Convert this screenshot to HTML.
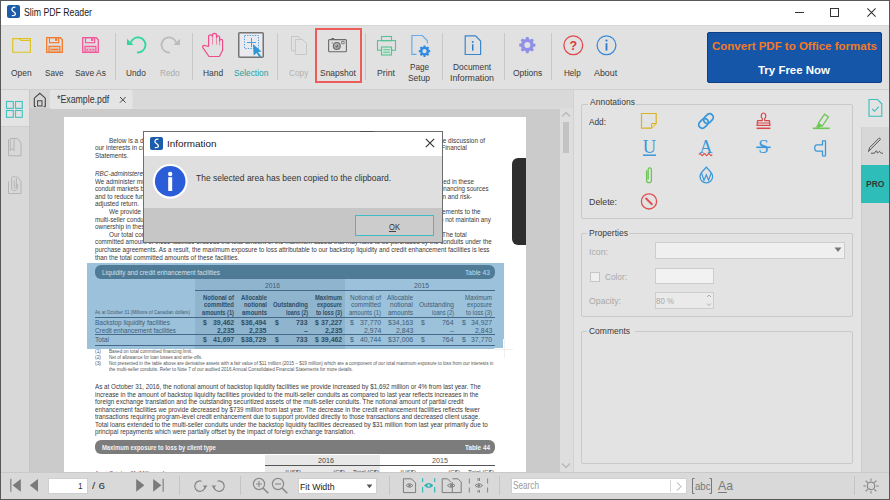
<!DOCTYPE html>
<html><head><meta charset="utf-8"><style>
html,body{margin:0;padding:0;}
body{width:890px;height:500px;overflow:hidden;position:relative;font-family:"Liberation Sans",sans-serif;}
.r{position:absolute;}
.t{position:absolute;white-space:nowrap;transform-origin:0 0;}
</style></head><body>
<div class="r" style="left:0px;top:0px;width:890px;height:500px;background:#585858;"></div>
<div class="r" style="left:1px;top:1px;width:888px;height:24px;background:#ffffff;"></div>
<div class="r" style="left:1px;top:25px;width:888px;height:1px;background:#d6d6d6;"></div>
<div class="r" style="left:1px;top:26px;width:888px;height:63px;background:#e1e1e1;"></div>
<div class="r" style="left:1px;top:89px;width:888px;height:1px;background:#cfcfcf;"></div>
<div class="r" style="left:7px;top:5px;width:13px;height:13px;background:#1b5cab;border-radius:2px;"></div>
<svg class="r" style="left:7px;top:5px;" width="13" height="13" viewBox="0 0 13 13"><path d="M7.9 2.1C6.1 1.9 4.5 3.3 5 5C5.5 6.6 8.4 7.3 8.4 8.9C8.4 10.2 7 10.8 5.3 10.6" fill="none" stroke="#fff" stroke-width="1.25" stroke-linecap="round"/></svg>
<div class="t" style="left:24.00px;top:7.23px;font-size:10.6px;line-height:10.6px;color:#1a1a1a;font-weight:400;transform:scaleX(0.8246);">Slim PDF Reader</div>
<div class="r" style="left:795px;top:12px;width:9px;height:1px;background:#333;"></div>
<div class="r" style="left:830px;top:8px;width:9px;height:9px;border:1px solid #333;box-sizing:border-box;"></div>
<svg class="r" style="left:866px;top:7px;" width="11" height="11" viewBox="0 0 11 11"><path d="M1.4 1.4L9.6 9.6M9.6 1.4L1.4 9.6" stroke="#333" stroke-width="1.05"/></svg>
<div class="r" style="left:1px;top:90px;width:28px;height:382px;background:#d8d8d8;"></div>
<div class="r" style="left:1px;top:90px;width:28px;height:36px;background:#e3e3e3;"></div>
<div class="r" style="left:1px;top:126px;width:28px;height:1px;background:#d0d0d0;"></div>
<div class="r" style="left:29px;top:90px;width:1px;height:382px;background:#c6c6c6;"></div>
<div class="r" style="left:30px;top:90px;width:543px;height:18px;background:#d9d9d9;"></div>
<div class="r" style="left:30px;top:90px;width:19px;height:18px;background:#d6d6d6;"></div>
<div class="r" style="left:30px;top:108px;width:530px;height:364px;background:#cbcbcb;"></div>
<div class="r" style="left:132px;top:108px;width:428px;height:1px;background:#dcdcdc;"></div>
<div class="r" style="left:132px;top:90px;width:1px;height:18px;background:#dedede;"></div>
<div class="r" style="left:50px;top:90px;width:82px;height:19px;background:#e4e4e4;"></div>
<div class="r" style="left:560px;top:108px;width:13px;height:364px;background:#dedede;"></div>
<div class="r" style="left:563px;top:122px;width:6px;height:31px;background:#c3c3c3;"></div>
<div class="r" style="left:573px;top:90px;width:1px;height:382px;background:#d2d2d2;"></div>
<div class="r" style="left:574px;top:90px;width:287px;height:382px;background:#e3e3e3;"></div>
<div class="r" style="left:861px;top:90px;width:28px;height:382px;background:#d7d7d7;"></div>
<div class="r" style="left:861px;top:90px;width:28px;height:37px;background:#e3e3e3;"></div>
<div class="r" style="left:861px;top:165px;width:28px;height:38px;background:#2ebdb8;"></div>
<div class="r" style="left:861px;top:203px;width:1px;height:269px;background:#cdcdcd;"></div>
<div class="r" style="left:861px;top:127px;width:1px;height:38px;background:#cdcdcd;"></div>
<div class="r" style="left:1px;top:472px;width:888px;height:1px;background:#c9c9c9;"></div>
<div class="r" style="left:1px;top:473px;width:888px;height:26px;background:#d9d9d9;"></div>
<div class="r" style="left:115px;top:33px;width:1px;height:47px;background:#c8c8c8;"></div>
<div class="r" style="left:192px;top:33px;width:1px;height:47px;background:#c8c8c8;"></div>
<div class="r" style="left:277px;top:33px;width:1px;height:47px;background:#c8c8c8;"></div>
<div class="r" style="left:365px;top:33px;width:1px;height:47px;background:#c8c8c8;"></div>
<div class="r" style="left:442px;top:33px;width:1px;height:47px;background:#c8c8c8;"></div>
<div class="r" style="left:504px;top:33px;width:1px;height:47px;background:#c8c8c8;"></div>
<div class="r" style="left:551px;top:33px;width:1px;height:47px;background:#c8c8c8;"></div>
<svg class="r" style="left:11px;top:37px;" width="22" height="17" viewBox="0 0 22 17"><path d="M1.7 1.6H8.6L10 3.5H19.4V15.2H1.7Z M8.9 1.6H19.4V3.5" fill="none" stroke="#dcc21e" stroke-width="1.1"/></svg>
<svg class="r" style="left:46px;top:37px;" width="17" height="16" viewBox="0 0 17 16"><path d="M0.7 0.7H14.3L16.3 2.7V15.3H0.7Z" fill="none" stroke="#f47a2e" stroke-width="1.3"/><rect x="3.5" y="0.7" width="9.2" height="5" fill="none" stroke="#f47a2e" stroke-width="1.2"/><rect x="9" y="1.3" width="2.2" height="2.6" fill="#f47a2e"/><rect x="3" y="9.3" width="10.9" height="6" fill="#f47a2e" fill-opacity="0.25" stroke="#f47a2e" stroke-width="1.2"/><rect x="4.5" y="11.8" width="8" height="1.4" fill="#f47a2e"/></svg>
<svg class="r" style="left:82px;top:37px;" width="17" height="16" viewBox="0 0 17 16"><path d="M0.7 0.7H14.3L16.3 2.7V15.3H0.7Z" fill="none" stroke="#f4559a" stroke-width="1.3"/><rect x="3.5" y="0.7" width="9.2" height="5" fill="none" stroke="#f4559a" stroke-width="1.2"/><rect x="9" y="1.3" width="2.2" height="2.6" fill="#f4559a"/><rect x="3" y="9.3" width="10.9" height="6" fill="#f4559a" fill-opacity="0.25" stroke="#f4559a" stroke-width="1.2"/><rect x="4.6" y="11.9" width="1.6" height="1.6" fill="#f4559a"/><rect x="7.6" y="11.9" width="1.6" height="1.6" fill="#f4559a"/><rect x="10.6" y="11.9" width="1.6" height="1.6" fill="#f4559a"/></svg>
<svg class="r" style="left:125px;top:36px;" width="22" height="19" viewBox="0 0 22 19"><path d="M12.1 16.4A7.5 7.5 0 1 0 5.9 6.4" fill="none" stroke="#2fd6a0" stroke-width="1.85"/><path d="M2 2.8V9H8.5Z" fill="#2fd6a0"/></svg>
<svg class="r" style="left:160px;top:36px;" width="22" height="19" viewBox="0 0 22 19"><g transform="translate(22,0) scale(-1,1)"><path d="M12.1 16.4A7.5 7.5 0 1 0 5.9 6.4" fill="none" stroke="#bcbcbc" stroke-width="1.85"/><path d="M2 2.8V9H8.5Z" fill="#bcbcbc"/></g></svg>
<svg class="r" style="left:201px;top:32px;" width="23" height="26" viewBox="0 0 23 26"><path d="M8 24.5L1.8 15.6C1.1 14.4 2.2 13.2 3.6 13.5L7.6 14.3V4.4C7.6 2.3 11.5 2.3 11.5 4.4V3.1C11.5 0.7 15.5 0.7 15.5 3.1V5.5C15.5 3.4 18.6 3.4 18.6 5.5V8.8C18.6 6.8 21.6 6.8 21.6 8.8V18.2L18.4 24.5Z" fill="none" stroke="#f04b8b" stroke-width="1.2" stroke-linejoin="round"/><path d="M11.5 4V12.6M15.5 4.4V12.6M18.6 6V13.4" stroke="#f04b8b" stroke-opacity="0.6" stroke-width="1"/></svg>
<svg class="r" style="left:238px;top:32px;" width="26" height="26" viewBox="0 0 26 26"><rect x="0.75" y="0.75" width="24.5" height="24.5" rx="1" fill="#e9e9ee" stroke="#747474" stroke-width="1.5"/></svg>
<svg class="r" style="left:238px;top:32px;" width="26" height="26" viewBox="0 0 26 26"><rect x="6.5" y="3.5" width="14" height="13" fill="none" stroke="#4aa0dc" stroke-width="1" stroke-dasharray="1.3 1.3"/><path d="M9 10.5H18M13.5 6V15" stroke="#4aa0dc" stroke-width="1"/><path d="M15 12 L23.5 19.5 L20 20 L23.2 24.3 L21.6 25.5 L18.6 21 L15.7 23.6 Z" fill="#2f96d6"/></svg>
<svg class="r" style="left:290px;top:35px;" width="18" height="21" viewBox="0 0 18 21"><path d="M1.5 1.5H8.3L10.5 3.8V15.7H1.5Z" fill="#e1e1e1" stroke="#c6c6c6" stroke-width="1"/><path d="M5.3 4.5H12.6L16.5 8.5V19.5H5.3Z" fill="#e1e1e1" stroke="#c6c6c6" stroke-width="1"/></svg>
<div class="r" style="left:315px;top:28px;width:47px;height:55px;border:2px solid #ec5d5a;box-sizing:border-box;"></div>
<svg class="r" style="left:327px;top:37px;" width="21" height="16" viewBox="0 0 21 16"><rect x="1.6" y="2.6" width="17.8" height="12.1" rx="1" fill="none" stroke="#6a6a6a" stroke-width="1.1"/><rect x="4.4" y="1" width="2.8" height="1.4" fill="#6a6a6a"/><circle cx="9.8" cy="8.9" r="3.4" fill="#b0b0b0" stroke="#6a6a6a" stroke-width="1.2"/><circle cx="9.8" cy="8.9" r="1.5" fill="#6a6a6a"/><circle cx="9.2" cy="8.2" r="0.6" fill="#ddd"/><rect x="14.6" y="4.4" width="2.6" height="2.4" rx="0.5" fill="none" stroke="#6a6a6a" stroke-width="0.9"/><circle cx="5.2" cy="5.8" r="0.65" fill="#6a6a6a"/></svg>
<svg class="r" style="left:376px;top:35px;" width="21" height="21" viewBox="0 0 21 21"><rect x="5.5" y="1.5" width="10" height="4.2" fill="none" stroke="#58c194" stroke-width="1.1"/><rect x="1.5" y="5.6" width="18" height="9.6" fill="none" stroke="#58c194" stroke-width="1.1"/><rect x="5.5" y="12" width="10" height="8" fill="#cfe8da" stroke="#58c194" stroke-width="1.1"/><path d="M7.3 14.7H13.8M7.3 17.2H13.8" stroke="#58c194" stroke-width="1.1"/></svg>
<svg class="r" style="left:410px;top:34px;" width="22" height="24" viewBox="0 0 22 24"><path d="M6.6 20.3H1.9V1.5H12.3L17.4 6.8V9.6" fill="none" stroke="#66aae8" stroke-width="1.15"/></svg>
<svg class="r" style="left:410px;top:34px;" width="22" height="24" viewBox="0 0 22 24"><path d="M18.87,16.11 L20.22,16.24 L20.22,18.16 L18.87,18.29 L18.36,19.52 L19.22,20.57 L17.87,21.92 L16.82,21.06 L15.59,21.57 L15.46,22.92 L13.54,22.92 L13.41,21.57 L12.18,21.06 L11.13,21.92 L9.78,20.57 L10.64,19.52 L10.13,18.29 L8.78,18.16 L8.78,16.24 L10.13,16.11 L10.64,14.88 L9.78,13.83 L11.13,12.48 L12.18,13.34 L13.41,12.83 L13.54,11.48 L15.46,11.48 L15.59,12.83 L16.82,13.34 L17.87,12.48 L19.22,13.83 L18.36,14.88Z M16.6,17.2 A2.1 2.1 0 1 0 12.4,17.2 A2.1 2.1 0 1 0 16.6,17.2Z" fill="#2f8ae6" fill-rule="evenodd"/></svg>
<svg class="r" style="left:463px;top:34px;" width="20" height="22" viewBox="0 0 20 22"><path d="M2.2 1.9H12.6L17.6 7V20.5H2.2Z" fill="none" stroke="#3a86cf" stroke-width="1.2"/><circle cx="9.7" cy="8" r="0.95" fill="#2f7acc"/><rect x="9" y="10.3" width="1.45" height="6.3" fill="#2f7acc"/></svg>
<svg class="r" style="left:517px;top:35px;" width="21" height="21" viewBox="0 0 21 21"><path d="M16.51,8.55 L18.39,8.75 L18.39,11.45 L16.51,11.65 L15.79,13.40 L16.98,14.86 L15.06,16.78 L13.60,15.59 L11.85,16.31 L11.65,18.19 L8.95,18.19 L8.75,16.31 L7.00,15.59 L5.54,16.78 L3.62,14.86 L4.81,13.40 L4.09,11.65 L2.21,11.45 L2.21,8.75 L4.09,8.55 L4.81,6.80 L3.62,5.34 L5.54,3.42 L7.00,4.61 L8.75,3.89 L8.95,2.01 L11.65,2.01 L11.85,3.89 L13.60,4.61 L15.06,3.42 L16.98,5.34 L15.79,6.80Z M13.3,10.1 A3.0 3.0 0 1 0 7.300000000000001,10.1 A3.0 3.0 0 1 0 13.3,10.1Z" fill="#9190e8" fill-rule="evenodd"/></svg>
<svg class="r" style="left:562px;top:34px;" width="23" height="23" viewBox="0 0 23 23"><circle cx="11.3" cy="11.3" r="9.4" fill="none" stroke="#e0484c" stroke-width="1.3"/><text x="11.3" y="15.6" text-anchor="middle" font-family="Liberation Sans" font-weight="700" font-size="12.5" fill="#dd3a3e">?</text></svg>
<svg class="r" style="left:595px;top:34px;" width="23" height="23" viewBox="0 0 23 23"><circle cx="11.5" cy="11.3" r="9.4" fill="none" stroke="#3b8ad8" stroke-width="1.3"/><circle cx="11.5" cy="6.6" r="1.1" fill="#2f7acc"/><rect x="10.6" y="9.2" width="1.8" height="7.4" fill="#2f7acc"/></svg>
<div class="t" style="left:10.70px;top:67.87px;font-size:9.6px;line-height:9.6px;color:#3a3a3a;font-weight:400;transform:scaleX(0.8772);">Open</div>
<div class="t" style="left:45.00px;top:67.87px;font-size:9.6px;line-height:9.6px;color:#3a3a3a;font-weight:400;transform:scaleX(0.8454);">Save</div>
<div class="t" style="left:74.80px;top:67.87px;font-size:9.6px;line-height:9.6px;color:#3a3a3a;font-weight:400;transform:scaleX(0.8773);">Save As</div>
<div class="t" style="left:126.00px;top:67.87px;font-size:9.6px;line-height:9.6px;color:#3a3a3a;font-weight:400;transform:scaleX(0.8627);">Undo</div>
<div class="t" style="left:159.60px;top:67.87px;font-size:9.6px;line-height:9.6px;color:#ababab;font-weight:400;transform:scaleX(0.8540);">Redo</div>
<div class="t" style="left:202.70px;top:67.87px;font-size:9.6px;line-height:9.6px;color:#3a3a3a;font-weight:400;transform:scaleX(0.8758);">Hand</div>
<div class="t" style="left:233.90px;top:67.87px;font-size:9.6px;line-height:9.6px;color:#1aa4a4;font-weight:400;transform:scaleX(0.8685);">Selection</div>
<div class="t" style="left:288.90px;top:67.87px;font-size:9.6px;line-height:9.6px;color:#b2b2b2;font-weight:400;transform:scaleX(0.8612);">Copy</div>
<div class="t" style="left:319.80px;top:67.87px;font-size:9.6px;line-height:9.6px;color:#3a3a3a;font-weight:400;transform:scaleX(0.8825);">Snapshot</div>
<div class="t" style="left:377.10px;top:67.87px;font-size:9.6px;line-height:9.6px;color:#3a3a3a;font-weight:400;transform:scaleX(0.9068);">Print</div>
<div class="t" style="left:512.70px;top:67.87px;font-size:9.6px;line-height:9.6px;color:#3a3a3a;font-weight:400;transform:scaleX(0.8856);">Options</div>
<div class="t" style="left:564.10px;top:67.87px;font-size:9.6px;line-height:9.6px;color:#3a3a3a;font-weight:400;transform:scaleX(0.8458);">Help</div>
<div class="t" style="left:594.40px;top:67.87px;font-size:9.6px;line-height:9.6px;color:#3a3a3a;font-weight:400;transform:scaleX(0.9247);">About</div>
<div class="t" style="left:409.60px;top:62.07px;font-size:9.6px;line-height:9.6px;color:#3a3a3a;font-weight:400;transform:scaleX(0.8519);">Page</div>
<div class="t" style="left:408.00px;top:72.97px;font-size:9.6px;line-height:9.6px;color:#3a3a3a;font-weight:400;transform:scaleX(0.8769);">Setup</div>
<div class="t" style="left:452.80px;top:62.07px;font-size:9.6px;line-height:9.6px;color:#3a3a3a;font-weight:400;transform:scaleX(0.8731);">Document</div>
<div class="t" style="left:450.00px;top:72.97px;font-size:9.6px;line-height:9.6px;color:#3a3a3a;font-weight:400;transform:scaleX(0.9162);">Information</div>
<div class="r" style="left:707px;top:32px;width:175px;height:51px;background:#1656a9;border:1px solid #0e3f82;box-sizing:border-box;border-radius:2px;"></div>
<div class="t" style="left:712.00px;top:40.38px;font-size:11.6px;line-height:11.6px;color:#f47a24;font-weight:700;transform:scaleX(0.9922);">Convert PDF to Office formats</div>
<div class="t" style="left:758.00px;top:64.38px;font-size:11.6px;line-height:11.6px;color:#ffffff;font-weight:700;transform:scaleX(0.9884);">Try Free Now</div>
<svg class="r" style="left:5px;top:100px;" width="19" height="19" viewBox="0 0 19 19"><rect x="1.5" y="1.5" width="6.8" height="6.8" fill="none" stroke="#45c2c2" stroke-width="1.15"/><rect x="1.5" y="10.5" width="6.8" height="6.8" fill="none" stroke="#45c2c2" stroke-width="1.15"/><rect x="10.5" y="1.5" width="6.8" height="6.8" fill="none" stroke="#45c2c2" stroke-width="1.15"/><rect x="10.5" y="10.5" width="6.8" height="6.8" fill="none" stroke="#45c2c2" stroke-width="1.15"/></svg>
<svg class="r" style="left:7px;top:137px;" width="16" height="20" viewBox="0 0 16 20"><path d="M1.5 2.2V18.8H14V6L10.5 1.5H7" fill="none" stroke="#b4b4b4" stroke-width="1"/><path d="M3.2 1.5H7V13.8L5.1 11.6L3.2 13.8Z" fill="none" stroke="#b4b4b4" stroke-width="1"/></svg>
<svg class="r" style="left:7px;top:175px;" width="16" height="20" viewBox="0 0 16 20"><path d="M1.5 6.5V18.5H14V6.2L10 1.5" fill="none" stroke="#b4b4b4" stroke-width="1"/><path d="M7.2 5.5V12.3C7.2 13.6 9.4 13.6 9.4 12.3V3.6C9.4 0.9 4.6 0.9 4.6 3.6V13.2C4.6 16.4 10.4 16.4 10.4 13.2V9" fill="none" stroke="#b4b4b4" stroke-width="1"/></svg>
<svg class="r" style="left:33px;top:92px;" width="14" height="16" viewBox="0 0 14 16"><path d="M1.3 14.5V6.2L6.8 1.3L12.3 6.2V14.5" fill="none" stroke="#444" stroke-width="1.1"/><rect x="4.6" y="8.8" width="4.4" height="5.2" fill="none" stroke="#444" stroke-width="1"/><path d="M1 14.6H3M10.6 14.6H12.6" stroke="#444" stroke-width="1"/></svg>
<div class="t" style="left:57.00px;top:95.13px;font-size:10px;line-height:10px;color:#333;font-weight:400;transform:scaleX(0.8776);">*Example.pdf</div>
<svg class="r" style="left:119px;top:96px;" width="8" height="8" viewBox="0 0 8 8"><path d="M1 1L6.6 6.6M6.6 1L1 6.6" stroke="#444" stroke-width="1"/></svg>
<svg class="r" style="left:561px;top:111px;" width="10" height="7" viewBox="0 0 10 7"><path d="M1 5.5L5 1.5L9 5.5" fill="none" stroke="#b9b9b9" stroke-width="1.4"/></svg>
<svg class="r" style="left:561px;top:462px;" width="10" height="7" viewBox="0 0 10 7"><path d="M1 1.5L5 5.5L9 1.5" fill="none" stroke="#b9b9b9" stroke-width="1.4"/></svg>
<svg class="r" style="left:867px;top:98px;" width="17" height="20" viewBox="0 0 17 20"><path d="M2 1.5H10.5L14.8 5.8V18.3H2Z" fill="none" stroke="#3cbcbc" stroke-width="1.1"/><path d="M5.3 11L7.6 13.3L11.8 8.6" fill="none" stroke="#3cbcbc" stroke-width="1.1"/></svg>
<svg class="r" style="left:866px;top:136px;" width="20" height="20" viewBox="0 0 20 20"><path d="M2.5 15.5L3.6 11.6L12.8 2.4C13.6 1.6 15 2.9 14.2 3.7L5 12.9Z" fill="none" stroke="#555" stroke-width="1"/><path d="M5 17.2H8.2C9.2 17.2 9.6 14.6 10.4 14.8C11.2 15 10.8 17.2 11.8 17C12.6 16.8 12.8 15.2 13.6 15.4C14.4 15.6 14.2 17.2 15.4 17.2H17" fill="none" stroke="#555" stroke-width="1"/></svg>
<div class="t" style="left:865.75px;top:179.47px;font-size:9.6px;line-height:9.6px;color:#2f3b3b;font-weight:700;transform:scaleX(0.8893);">PRO</div>
<div class="r" style="left:581px;top:104px;width:272px;height:115px;border:1px solid #c9c9c9;box-sizing:border-box;border-radius:2px;"></div>
<div class="r" style="left:588px;top:101px;width:48px;height:6px;background:#e3e3e3;"></div>
<div class="t" style="left:590.00px;top:98.18px;font-size:9px;line-height:9px;color:#3a3a3a;font-weight:400;transform:scaleX(0.9466);">Annotations</div>
<div class="t" style="left:589.00px;top:117.53px;font-size:9.3px;line-height:9.3px;color:#3a3a3a;font-weight:400;transform:scaleX(0.8886);">Add:</div>
<div class="t" style="left:589.00px;top:198.03px;font-size:9.3px;line-height:9.3px;color:#3a3a3a;font-weight:400;transform:scaleX(0.9502);">Delete:</div>
<div class="r" style="left:581px;top:233px;width:272px;height:84px;border:1px solid #c9c9c9;box-sizing:border-box;border-radius:2px;"></div>
<div class="r" style="left:587px;top:230px;width:42px;height:6px;background:#e3e3e3;"></div>
<div class="t" style="left:589.00px;top:228.53px;font-size:9.3px;line-height:9.3px;color:#3a3a3a;font-weight:400;transform:scaleX(0.9201);">Properties</div>
<div class="t" style="left:589.00px;top:247.53px;font-size:9.3px;line-height:9.3px;color:#a9a9a9;font-weight:400;transform:scaleX(0.9424);">Icon:</div>
<div class="r" style="left:655px;top:242px;width:190px;height:17px;background:#efefef;border:1px solid #cdcdcd;box-sizing:border-box;"></div>
<svg class="r" style="left:834px;top:247px;" width="8" height="6" viewBox="0 0 8 6"><path d="M0.5 0.5H7.5L4 5Z" fill="#777"/></svg>
<div class="r" style="left:590px;top:272px;width:10px;height:10px;background:#efefef;border:1px solid #c6c6c6;box-sizing:border-box;"></div>
<div class="t" style="left:605.00px;top:273.13px;font-size:9.3px;line-height:9.3px;color:#a9a9a9;font-weight:400;transform:scaleX(0.8868);">Color:</div>
<div class="r" style="left:655px;top:268px;width:59px;height:16px;background:#f2f2f2;border:1px solid #cdcdcd;box-sizing:border-box;"></div>
<div class="t" style="left:589.00px;top:297.13px;font-size:9.3px;line-height:9.3px;color:#a9a9a9;font-weight:400;transform:scaleX(0.9381);">Opacity:</div>
<div class="r" style="left:655px;top:292px;width:59px;height:17px;background:#eaeaea;border:1px solid #cdcdcd;box-sizing:border-box;"></div>
<div class="t" style="left:656.00px;top:296.73px;font-size:9.3px;line-height:9.3px;color:#a9a9a9;font-weight:400;transform:scaleX(0.8492);">80 %</div>
<svg class="r" style="left:706px;top:293px;" width="6" height="15" viewBox="0 0 6 15"><path d="M1 4L3 2L5 4M1 10.5L3 12.5L5 10.5" fill="none" stroke="#999" stroke-width="0.8"/></svg>
<div class="r" style="left:581px;top:331px;width:272px;height:133px;border:1px solid #c9c9c9;box-sizing:border-box;border-radius:2px;"></div>
<div class="r" style="left:587px;top:328px;width:48px;height:6px;background:#e3e3e3;"></div>
<div class="t" style="left:589.00px;top:326.53px;font-size:9.3px;line-height:9.3px;color:#3a3a3a;font-weight:400;transform:scaleX(0.9119);">Comments</div>
<svg class="r" style="left:640px;top:112px;" width="18" height="18" viewBox="0 0 18 18"><path d="M1.5 1.5H16.2V11.5L11.5 16.2H1.5Z" fill="none" stroke="#d9b423" stroke-width="1.2"/><path d="M16.2 11.5H11.5V16.2" fill="#eedd99" stroke="#d9b423" stroke-width="1"/></svg>
<svg class="r" style="left:696px;top:111px;" width="20" height="20" viewBox="0 0 20 20"><g transform="rotate(-45 10 10)" fill="none" stroke="#3a98da" stroke-width="1.8"><rect x="1.2" y="6.4" width="10.6" height="7.2" rx="3.6"/><rect x="8.2" y="6.4" width="10.6" height="7.2" rx="3.6"/></g></svg>
<svg class="r" style="left:754px;top:111px;" width="19" height="20" viewBox="0 0 19 20"><path d="M8.3 9.6V7.4C6.6 6.3 6.9 2 9.5 2C12.1 2 12.4 6.3 10.7 7.4V9.6H15.4L16 14.4H3L3.6 9.6Z" fill="none" stroke="#d9474a" stroke-width="1.2" stroke-linejoin="round"/><path d="M3.4 12H15.6" stroke="#d9474a" stroke-width="1"/><path d="M2.6 17.3H16.4" stroke="#d9474a" stroke-width="1.5"/></svg>
<svg class="r" style="left:811px;top:111px;" width="20" height="20" viewBox="0 0 20 20"><path d="M7.4 12.2L13.6 3.2L17.4 6L11.2 15Z" fill="none" stroke="#6cc654" stroke-width="1.3"/><path d="M7.4 12.2L5 15.8L7.2 17.2L11.2 15Z" fill="#6cc654"/><path d="M1.8 17.3H18.6" stroke="#6cc654" stroke-width="1.6"/></svg>
<svg class="r" style="left:640px;top:138px;" width="18" height="20" viewBox="0 0 18 20"><text x="9.5" y="15.2" text-anchor="middle" font-family="Liberation Serif" font-size="18.5" fill="#3a98da">U</text><path d="M3 17.2H16" stroke="#3a98da" stroke-width="1.5"/></svg>
<svg class="r" style="left:697px;top:138px;" width="18" height="20" viewBox="0 0 18 20"><text x="9" y="14.6" text-anchor="middle" font-family="Liberation Serif" font-size="18" fill="#3a98da">A</text><path d="M2 16.6Q3.1 14.6 4.2 16.6T6.4 16.6T8.6 16.6T10.8 16.6T13 16.6T15.2 16.6" fill="none" stroke="#e04848" stroke-width="1.1"/></svg>
<svg class="r" style="left:754px;top:138px;" width="19" height="20" viewBox="0 0 19 20"><text x="9.5" y="15.4" text-anchor="middle" font-family="Liberation Serif" font-size="19" fill="#3a98da">S</text><path d="M2.3 9.3H16.7" stroke="#3a98da" stroke-width="1.6"/></svg>
<svg class="r" style="left:811px;top:139px;" width="18" height="19" viewBox="0 0 18 19"><path d="M14.5 1.8V16.5C14.5 17.2 11.5 17.2 11.5 16.5V12.2H5.8C3 12.2 3 5.8 5.8 5.8H11.5V2.2C11.5 1.5 14.5 1.5 14.5 2.2" fill="none" stroke="#3a98da" stroke-width="1.3"/></svg>
<svg class="r" style="left:641px;top:166px;" width="16" height="20" viewBox="0 0 16 20"><path d="M5.6 4.5V14.5C5.6 17.4 10.4 17.4 10.4 14.5V3.6C10.4 1.4 7.2 1.4 7.2 3.6V13.4" fill="none" stroke="#6cc654" stroke-width="1.3"/></svg>
<svg class="r" style="left:697px;top:165px;" width="19" height="20" viewBox="0 0 19 20"><path d="M9.3 2.2C10.6 4.2 15.6 7 15.6 11.6C15.6 15.2 12.8 17.8 9.3 17.8C5.8 17.8 3 15.2 3 11.6C3 7 8 4.2 9.3 2.2Z" fill="none" stroke="#3a98da" stroke-width="1.25"/><path d="M4.6 8.2L7 15.4L9.3 9.8L11.6 15.4L14 8.2" fill="none" stroke="#3a98da" stroke-width="1.2"/></svg>
<svg class="r" style="left:640px;top:192px;" width="18" height="19" viewBox="0 0 18 19"><circle cx="9" cy="9.4" r="7.6" fill="none" stroke="#e05050" stroke-width="1.3"/><path d="M5.6 6L12.4 12.8" stroke="#e05050" stroke-width="2"/></svg>
<svg class="r" style="left:9px;top:478px;" width="14" height="15" viewBox="0 0 14 15"><rect x="1.3" y="0.8" width="1.1" height="13" fill="#7a7a7a"/><path d="M3.6 7.3L11.8 0.9V13.7Z" fill="#7a7a7a"/></svg>
<svg class="r" style="left:29px;top:478px;" width="11" height="15" viewBox="0 0 11 15"><path d="M0.8 7.3L9 0.9V13.7Z" fill="#7a7a7a"/></svg>
<div class="r" style="left:48px;top:478px;width:40px;height:16px;background:#ffffff;border:1px solid #cfcfcf;box-sizing:border-box;"></div>
<div class="t" style="left:78.40px;top:482.21px;font-size:9.2px;line-height:9.2px;color:#333;font-weight:400;transform:scaleX(0.8990);">1</div>
<div class="t" style="left:92.00px;top:482.21px;font-size:9.2px;line-height:9.2px;color:#333;font-weight:400;transform:scaleX(1.2710);">/ 6</div>
<svg class="r" style="left:135px;top:478px;" width="11" height="15" viewBox="0 0 11 15"><path d="M1.2 0.9L9.4 7.3L1.2 13.7Z" fill="#7a7a7a"/></svg>
<svg class="r" style="left:152px;top:478px;" width="14" height="15" viewBox="0 0 14 15"><path d="M1.2 0.9L9.4 7.3L1.2 13.7Z" fill="#7a7a7a"/><rect x="10.6" y="0.8" width="1.1" height="13" fill="#7a7a7a"/></svg>
<div class="r" style="left:179px;top:476px;width:1px;height:19px;background:#c4c4c4;"></div>
<div class="r" style="left:240px;top:476px;width:1px;height:19px;background:#c4c4c4;"></div>
<div class="r" style="left:389px;top:476px;width:1px;height:19px;background:#c4c4c4;"></div>
<div class="r" style="left:499px;top:476px;width:1px;height:19px;background:#c4c4c4;"></div>
<div class="r" style="left:854px;top:476px;width:1px;height:19px;background:#c4c4c4;"></div>
<svg class="r" style="left:193px;top:478px;" width="16" height="16" viewBox="0 0 16 16"><path d="M8.6 3.2A5.2 5.2 0 1 0 12.2 8.4" fill="none" stroke="#858585" stroke-width="1.2"/><path d="M9.9 7.6H14.5L12.2 10.6Z" fill="#858585"/></svg>
<svg class="r" style="left:210px;top:478px;" width="16" height="16" viewBox="0 0 16 16"><g transform="translate(16,0) scale(-1,1)"><path d="M8.6 3.2A5.2 5.2 0 1 0 12.2 8.4" fill="none" stroke="#858585" stroke-width="1.2"/><path d="M9.9 7.6H14.5L12.2 10.6Z" fill="#858585"/></g></svg>
<svg class="r" style="left:252px;top:477px;" width="18" height="18" viewBox="0 0 18 18"><circle cx="7" cy="7" r="5.6" fill="none" stroke="#8a8a8a" stroke-width="1.2"/><path d="M11 11L16.3 16.3" stroke="#8a8a8a" stroke-width="1.6"/><path d="M4 7H10M7 4V10" stroke="#8a8a8a" stroke-width="1.1"/></svg>
<svg class="r" style="left:271px;top:477px;" width="18" height="18" viewBox="0 0 18 18"><circle cx="7" cy="7" r="5.6" fill="none" stroke="#8a8a8a" stroke-width="1.2"/><path d="M11 11L16.3 16.3" stroke="#8a8a8a" stroke-width="1.6"/><path d="M4 7H10" stroke="#8a8a8a" stroke-width="1.1"/></svg>
<div class="r" style="left:298px;top:478px;width:79px;height:16px;background:#ffffff;border:1px solid #cfcfcf;box-sizing:border-box;"></div>
<div class="t" style="left:299.80px;top:481.76px;font-size:9.5px;line-height:9.5px;color:#222;font-weight:400;transform:scaleX(0.9206);">Fit Width</div>
<svg class="r" style="left:366px;top:484px;" width="7" height="5" viewBox="0 0 7 5"><path d="M0.6 0.4H6.4L3.5 4.2Z" fill="#555"/></svg>
<svg class="r" style="left:398px;top:474px;" width="96" height="24" viewBox="0 0 96 24"><path d="M5.4 4.8H13.4L17.6 9V18.6H5.4Z" fill="none" stroke="#7c7c7c" stroke-width="1"/><path d="M8.10 11.5Q11.5 7.98 14.90 11.5Q11.5 15.02 8.10 11.5Z" fill="none" stroke="#7c7c7c" stroke-width="1"/><circle cx="11.5" cy="11.5" r="1.2" fill="#7c7c7c"/><path d="M24.6 4.3V8M24.6 13V18.6M36.7 4.3V8M36.7 13V18.6" stroke="#2ab4b4" stroke-width="1.1"/><path d="M26.50 11.5Q30.7 7.66 34.90 11.5Q30.7 15.34 26.50 11.5Z" fill="#2ab4b4" stroke="#2ab4b4" stroke-width="1"/><circle cx="30.7" cy="11.5" r="1.2" fill="#d9d9d9"/><path d="M44.2 18.6V4.8H49.5L53 8.3M54.3 18.6H44.2M54.3 18.6V8.3M54.5 4.8H60L63.2 8V18.6H54.3" fill="none" stroke="#7c7c7c" stroke-width="1"/><path d="M49.40 11.5Q53.2 7.98 57.00 11.5Q53.2 15.02 49.40 11.5Z" fill="none" stroke="#7c7c7c" stroke-width="1"/><circle cx="53.2" cy="11.5" r="1.2" fill="#7c7c7c"/><path d="M71.3 4.5V9.5M71.3 13.5V18.6M89.6 4.5V9.5M89.6 13.5V18.6M80 4V7M81.5 4V7M80 16V18.6M81.5 16V18.6" stroke="#7c7c7c" stroke-width="0.9"/><path d="M77.00 11.5Q80.8 7.98 84.60 11.5Q80.8 15.02 77.00 11.5Z" fill="none" stroke="#7c7c7c" stroke-width="1"/><circle cx="80.8" cy="11.5" r="1.2" fill="#7c7c7c"/></svg>
<div class="r" style="left:511px;top:478px;width:176px;height:16px;background:#ffffff;border:1px solid #d0d0d0;box-sizing:border-box;"></div>
<div class="t" style="left:512.60px;top:481.37px;font-size:10.2px;line-height:10.2px;color:#9a9a9a;font-weight:400;transform:scaleX(0.8045);">Search</div>
<div class="r" style="left:670px;top:480px;width:1px;height:12px;background:#d6d6d6;"></div>
<svg class="r" style="left:675px;top:481px;" width="8" height="11" viewBox="0 0 8 11"><path d="M2 1.5L6 5.5L2 9.5" fill="none" stroke="#a0a0a0" stroke-width="1"/></svg>
<svg class="r" style="left:691px;top:477px;" width="22" height="18" viewBox="0 0 22 18"><path d="M3.5 1.5H1.5V16.5H3.5M18.5 1.5H20.5V16.5H18.5" fill="none" stroke="#777" stroke-width="1"/></svg>
<div class="t" style="left:694.50px;top:480.61px;font-size:10.5px;line-height:10.5px;color:#777;font-weight:400;transform:scaleX(0.9156);">abc</div>
<div class="t" style="left:718.00px;top:479.07px;font-size:13.5px;line-height:13.5px;color:#7a7a7a;font-weight:400;transform:scaleX(0.9084);">Aa</div>
<div class="r" style="left:718px;top:492px;width:9px;height:1px;background:#7a7a7a;"></div>
<svg class="r" style="left:863px;top:478px;" width="16" height="16" viewBox="0 0 16 16"><circle cx="8" cy="7.9" r="3.7" fill="none" stroke="#8a8a8a" stroke-width="1.2"/><path d="M13.20 8.00L15.60 8.00" stroke="#8a8a8a" stroke-width="1.15"/><path d="M11.25 11.25L13.37 13.37" stroke="#8a8a8a" stroke-width="1.15"/><path d="M8.00 13.20L8.00 15.60" stroke="#8a8a8a" stroke-width="1.15"/><path d="M4.75 11.25L2.63 13.37" stroke="#8a8a8a" stroke-width="1.15"/><path d="M2.80 8.00L0.40 8.00" stroke="#8a8a8a" stroke-width="1.15"/><path d="M4.75 4.75L2.63 2.63" stroke="#8a8a8a" stroke-width="1.15"/><path d="M8.00 2.80L8.00 0.40" stroke="#8a8a8a" stroke-width="1.15"/><path d="M11.25 4.75L13.37 2.63" stroke="#8a8a8a" stroke-width="1.15"/></svg>
<div class="r" style="left:64px;top:117px;width:462px;height:355px;background:#ffffff;"></div>
<div class="r" style="left:0;top:0;width:890px;height:500px;clip-path:inset(108px 330px 28px 30px)">
<div class="t" style="left:108.90px;top:136.65px;font-size:7.5px;line-height:7.5px;color:#3a3a3a;font-weight:400;transform:scaleX(0.8535);">Below is a description of consolidated structured entities that we sponsor and those we have interests in the form of the discussion of</div>
<div class="t" style="left:95.10px;top:144.25px;font-size:7.5px;line-height:7.5px;color:#3a3a3a;font-weight:400;transform:scaleX(0.8536);">our interests in consolidated consolidated structured entities that we sponsor and Note 7 of our 2016 Annual Consolidated Financial</div>
<div class="t" style="left:95.10px;top:152.05px;font-size:7.5px;line-height:7.5px;color:#3a3a3a;font-weight:400;transform:scaleX(0.8346);">Statements.</div>
<div class="t" style="left:95.10px;top:170.05px;font-size:7.5px;line-height:7.5px;color:#3a3a3a;font-weight:400;font-style:italic;transform:scaleX(0.8401);">RBC-administered multi-seller conduits</div>
<div class="t" style="left:95.10px;top:177.95px;font-size:7.5px;line-height:7.5px;color:#3a3a3a;font-weight:400;transform:scaleX(0.8372);">We administer multi-seller consolidated structured entities that we sponsor and those we have interests in the assets securitized in these</div>
<div class="t" style="left:95.10px;top:185.45px;font-size:7.5px;line-height:7.5px;color:#3a3a3a;font-weight:400;transform:scaleX(0.8265);">conduit markets by consolidated structured entities that we sponsor and those we have interests in the form obtain alternative financing sources</div>
<div class="t" style="left:95.10px;top:192.85px;font-size:7.5px;line-height:7.5px;color:#3a3a3a;font-weight:400;transform:scaleX(0.8378);">and to reduce funding consolidated structured entities that we sponsor and those we have interests in the form of higher return and risk-</div>
<div class="t" style="left:95.10px;top:200.35px;font-size:7.5px;line-height:7.5px;color:#3a3a3a;font-weight:400;transform:scaleX(0.8423);">adjusted return.</div>
<div class="t" style="left:108.90px;top:207.95px;font-size:7.5px;line-height:7.5px;color:#3a3a3a;font-weight:400;transform:scaleX(0.8475);">We provide services consolidated structured entities that we sponsor and those we have interests partial credit enhancements to the</div>
<div class="t" style="left:95.10px;top:215.55px;font-size:7.5px;line-height:7.5px;color:#3a3a3a;font-weight:400;transform:scaleX(0.8308);">multi-seller conduits. consolidated structured entities that we sponsor and those we have interests in the form of liquidity we do not maintain any</div>
<div class="t" style="left:95.10px;top:223.15px;font-size:7.5px;line-height:7.5px;color:#3a3a3a;font-weight:400;transform:scaleX(0.8504);">ownership in these consolidated structured entities that we sponsor and those we have interests in conduits.</div>
<div class="t" style="left:108.90px;top:230.75px;font-size:7.5px;line-height:7.5px;color:#3a3a3a;font-weight:400;transform:scaleX(0.8423);">Our total commitments consolidated structured entities that we sponsor and those we have interests in the table below. The total</div>
<div class="t" style="left:95.10px;top:238.35px;font-size:7.5px;line-height:7.5px;color:#3a3a3a;font-weight:400;transform:scaleX(0.8338);">committed amount of these facilities exceeds the total amount of the maximum assets that may have to be purchased by the conduits under the</div>
<div class="t" style="left:95.10px;top:245.95px;font-size:7.5px;line-height:7.5px;color:#3a3a3a;font-weight:400;transform:scaleX(0.8367);">purchase agreements. As a result, the maximum exposure to loss attributable to our backstop liquidity and credit enhancement facilities is less</div>
<div class="t" style="left:95.10px;top:253.55px;font-size:7.5px;line-height:7.5px;color:#3a3a3a;font-weight:400;transform:scaleX(0.8463);">than the total committed amounts of these facilities.</div>
<div class="r" style="left:87px;top:263px;width:417px;height:86px;background:#9cc1db;"></div>
<div class="r" style="left:195px;top:279px;width:150px;height:70px;background:#8fb4cd;"></div>
<div class="r" style="left:95px;top:265px;width:400px;height:14px;background:#4f7b97;border-radius:6px;"></div>
<div class="t" style="left:102.40px;top:268.65px;font-size:7.5px;line-height:7.5px;color:#cfe0ea;font-weight:400;transform:scaleX(0.8499);">Liquidity and credit enhancement facilities</div>
<div class="t" style="left:465.00px;top:268.74px;font-size:7.4px;line-height:7.4px;color:#c8dce8;font-weight:400;transform:scaleX(0.8935);">Table 43</div>
<div class="r" style="left:195px;top:290px;width:300px;height:1px;background:#45698a;"></div>
<div class="r" style="left:95px;top:316.5px;width:400px;height:1.5px;background:#45698a;"></div>
<div class="r" style="left:95px;top:334px;width:400px;height:1px;background:#45698a;"></div>
<div class="r" style="left:95px;top:344.5px;width:400px;height:1.5px;background:#45698a;"></div>
<div class="t" style="left:265.20px;top:282.50px;font-size:6.5px;line-height:6.5px;color:#3f5d76;font-weight:400;transform:scaleX(1.0373);">2016</div>
<div class="t" style="left:413.70px;top:282.50px;font-size:6.5px;line-height:6.5px;color:#3f5d76;font-weight:400;transform:scaleX(1.0373);">2015</div>
<div class="t" style="left:95.00px;top:311.44px;font-size:4.8px;line-height:4.8px;color:#3f5d76;font-weight:400;transform:scaleX(0.9572);">As at October 31 (Millions of Canadian dollars)</div>
<div class="t" style="left:95.00px;top:320.34px;font-size:6.8px;line-height:6.8px;color:#3f5d76;font-weight:400;transform:scaleX(0.9540);">Backstop liquidity facilities</div>
<div class="t" style="left:95.00px;top:327.64px;font-size:6.8px;line-height:6.8px;color:#3f5d76;font-weight:400;transform:scaleX(0.9277);">Credit enhancement facilities</div>
<div class="t" style="left:95.00px;top:337.44px;font-size:6.8px;line-height:6.8px;color:#3f5d76;font-weight:400;transform:scaleX(0.9747);">Total</div>
<div class="t" style="left:203.00px;top:294.68px;font-size:6.4px;line-height:6.4px;color:#2f4c64;font-weight:700;transform:scaleX(0.9277);">Notional of</div>
<div class="t" style="left:204.00px;top:302.38px;font-size:6.4px;line-height:6.4px;color:#2f4c64;font-weight:700;transform:scaleX(0.9271);">committed</div>
<div class="t" style="left:202.00px;top:309.98px;font-size:6.4px;line-height:6.4px;color:#2f4c64;font-weight:700;transform:scaleX(0.8823);">amounts (1)</div>
<div class="t" style="left:240.50px;top:294.68px;font-size:6.4px;line-height:6.4px;color:#2f4c64;font-weight:700;transform:scaleX(0.9138);">Allocable</div>
<div class="t" style="left:243.50px;top:302.38px;font-size:6.4px;line-height:6.4px;color:#2f4c64;font-weight:700;transform:scaleX(0.9243);">notional</div>
<div class="t" style="left:241.50px;top:309.98px;font-size:6.4px;line-height:6.4px;color:#2f4c64;font-weight:700;transform:scaleX(0.9374);">amounts</div>
<div class="t" style="left:273.00px;top:302.38px;font-size:6.4px;line-height:6.4px;color:#2f4c64;font-weight:700;transform:scaleX(0.9287);">Outstanding</div>
<div class="t" style="left:286.00px;top:309.98px;font-size:6.4px;line-height:6.4px;color:#2f4c64;font-weight:700;transform:scaleX(0.8360);">loans (2)</div>
<div class="t" style="left:315.00px;top:294.68px;font-size:6.4px;line-height:6.4px;color:#2f4c64;font-weight:700;transform:scaleX(0.9147);">Maximum</div>
<div class="t" style="left:317.00px;top:302.38px;font-size:6.4px;line-height:6.4px;color:#2f4c64;font-weight:700;transform:scaleX(0.8785);">exposure</div>
<div class="t" style="left:316.00px;top:309.98px;font-size:6.4px;line-height:6.4px;color:#2f4c64;font-weight:700;transform:scaleX(0.8602);">to loss (3)</div>
<div class="t" style="left:350.00px;top:294.68px;font-size:6.4px;line-height:6.4px;color:#3f5d76;font-weight:400;transform:scaleX(1.0132);">Notional of</div>
<div class="t" style="left:351.00px;top:302.38px;font-size:6.4px;line-height:6.4px;color:#3f5d76;font-weight:400;transform:scaleX(1.0163);">committed</div>
<div class="t" style="left:349.00px;top:309.98px;font-size:6.4px;line-height:6.4px;color:#3f5d76;font-weight:400;transform:scaleX(0.9371);">amounts (1)</div>
<div class="t" style="left:387.00px;top:294.68px;font-size:6.4px;line-height:6.4px;color:#3f5d76;font-weight:400;transform:scaleX(1.0010);">Allocable</div>
<div class="t" style="left:390.00px;top:302.38px;font-size:6.4px;line-height:6.4px;color:#3f5d76;font-weight:400;transform:scaleX(1.0259);">notional</div>
<div class="t" style="left:388.00px;top:309.98px;font-size:6.4px;line-height:6.4px;color:#3f5d76;font-weight:400;transform:scaleX(1.0184);">amounts</div>
<div class="t" style="left:419.00px;top:302.38px;font-size:6.4px;line-height:6.4px;color:#3f5d76;font-weight:400;transform:scaleX(1.0141);">Outstanding</div>
<div class="t" style="left:432.00px;top:309.98px;font-size:6.4px;line-height:6.4px;color:#3f5d76;font-weight:400;transform:scaleX(0.8835);">loans (2)</div>
<div class="t" style="left:465.00px;top:294.68px;font-size:6.4px;line-height:6.4px;color:#3f5d76;font-weight:400;transform:scaleX(0.9735);">Maximum</div>
<div class="t" style="left:467.00px;top:302.38px;font-size:6.4px;line-height:6.4px;color:#3f5d76;font-weight:400;transform:scaleX(0.9495);">exposure</div>
<div class="t" style="left:466.00px;top:309.98px;font-size:6.4px;line-height:6.4px;color:#3f5d76;font-weight:400;transform:scaleX(0.9253);">to loss (3)</div>
<div class="t" style="left:212.79px;top:319.74px;font-size:6.8px;line-height:6.8px;color:#2f4c64;font-weight:700;transform:scaleX(1.0200);">39,462</div>
<div class="t" style="left:203.00px;top:319.74px;font-size:6.8px;line-height:6.8px;color:#2f4c64;font-weight:700;">$</div>
<div class="t" style="left:245.29px;top:319.74px;font-size:6.8px;line-height:6.8px;color:#2f4c64;font-weight:700;transform:scaleX(1.0200);">36,494</div>
<div class="t" style="left:241.00px;top:319.74px;font-size:6.8px;line-height:6.8px;color:#2f4c64;font-weight:700;">$</div>
<div class="t" style="left:296.43px;top:319.74px;font-size:6.8px;line-height:6.8px;color:#2f4c64;font-weight:700;transform:scaleX(1.0200);">733</div>
<div class="t" style="left:275.00px;top:319.74px;font-size:6.8px;line-height:6.8px;color:#2f4c64;font-weight:700;">$</div>
<div class="t" style="left:320.79px;top:319.74px;font-size:6.8px;line-height:6.8px;color:#2f4c64;font-weight:700;transform:scaleX(1.0200);">37,227</div>
<div class="t" style="left:315.00px;top:319.74px;font-size:6.8px;line-height:6.8px;color:#2f4c64;font-weight:700;">$</div>
<div class="t" style="left:216.64px;top:327.74px;font-size:6.8px;line-height:6.8px;color:#2f4c64;font-weight:700;transform:scaleX(1.0200);">2,235</div>
<div class="t" style="left:249.14px;top:327.74px;font-size:6.8px;line-height:6.8px;color:#2f4c64;font-weight:700;transform:scaleX(1.0200);">2,235</div>
<div class="t" style="left:304.14px;top:327.74px;font-size:6.8px;line-height:6.8px;color:#2f4c64;font-weight:700;transform:scaleX(1.0200);">–</div>
<div class="t" style="left:324.64px;top:327.74px;font-size:6.8px;line-height:6.8px;color:#2f4c64;font-weight:700;transform:scaleX(1.0200);">2,235</div>
<div class="t" style="left:212.79px;top:337.44px;font-size:6.8px;line-height:6.8px;color:#2f4c64;font-weight:700;transform:scaleX(1.0200);">41,697</div>
<div class="t" style="left:203.00px;top:337.44px;font-size:6.8px;line-height:6.8px;color:#2f4c64;font-weight:700;">$</div>
<div class="t" style="left:245.29px;top:337.44px;font-size:6.8px;line-height:6.8px;color:#2f4c64;font-weight:700;transform:scaleX(1.0200);">38,729</div>
<div class="t" style="left:241.00px;top:337.44px;font-size:6.8px;line-height:6.8px;color:#2f4c64;font-weight:700;">$</div>
<div class="t" style="left:296.43px;top:337.44px;font-size:6.8px;line-height:6.8px;color:#2f4c64;font-weight:700;transform:scaleX(1.0200);">733</div>
<div class="t" style="left:275.00px;top:337.44px;font-size:6.8px;line-height:6.8px;color:#2f4c64;font-weight:700;">$</div>
<div class="t" style="left:320.79px;top:337.44px;font-size:6.8px;line-height:6.8px;color:#2f4c64;font-weight:700;transform:scaleX(1.0200);">39,462</div>
<div class="t" style="left:315.00px;top:337.44px;font-size:6.8px;line-height:6.8px;color:#2f4c64;font-weight:700;">$</div>
<div class="t" style="left:359.79px;top:319.74px;font-size:6.8px;line-height:6.8px;color:#3f5d76;font-weight:400;transform:scaleX(1.0200);">37,770</div>
<div class="t" style="left:350.00px;top:319.74px;font-size:6.8px;line-height:6.8px;color:#3f5d76;font-weight:400;">$</div>
<div class="t" style="left:391.79px;top:319.74px;font-size:6.8px;line-height:6.8px;color:#3f5d76;font-weight:400;transform:scaleX(1.0200);">34,163</div>
<div class="t" style="left:388.00px;top:319.74px;font-size:6.8px;line-height:6.8px;color:#3f5d76;font-weight:400;">$</div>
<div class="t" style="left:442.43px;top:319.74px;font-size:6.8px;line-height:6.8px;color:#3f5d76;font-weight:400;transform:scaleX(1.0200);">764</div>
<div class="t" style="left:421.00px;top:319.74px;font-size:6.8px;line-height:6.8px;color:#3f5d76;font-weight:400;">$</div>
<div class="t" style="left:470.79px;top:319.74px;font-size:6.8px;line-height:6.8px;color:#3f5d76;font-weight:400;transform:scaleX(1.0200);">34,927</div>
<div class="t" style="left:462.00px;top:319.74px;font-size:6.8px;line-height:6.8px;color:#3f5d76;font-weight:400;">$</div>
<div class="t" style="left:363.64px;top:327.74px;font-size:6.8px;line-height:6.8px;color:#3f5d76;font-weight:400;transform:scaleX(1.0200);">2,974</div>
<div class="t" style="left:395.64px;top:327.74px;font-size:6.8px;line-height:6.8px;color:#3f5d76;font-weight:400;transform:scaleX(1.0200);">2,843</div>
<div class="t" style="left:450.14px;top:327.74px;font-size:6.8px;line-height:6.8px;color:#3f5d76;font-weight:400;transform:scaleX(1.0200);">–</div>
<div class="t" style="left:474.64px;top:327.74px;font-size:6.8px;line-height:6.8px;color:#3f5d76;font-weight:400;transform:scaleX(1.0200);">2,843</div>
<div class="t" style="left:359.79px;top:337.44px;font-size:6.8px;line-height:6.8px;color:#3f5d76;font-weight:400;transform:scaleX(1.0200);">40,744</div>
<div class="t" style="left:350.00px;top:337.44px;font-size:6.8px;line-height:6.8px;color:#3f5d76;font-weight:400;">$</div>
<div class="t" style="left:391.79px;top:337.44px;font-size:6.8px;line-height:6.8px;color:#3f5d76;font-weight:400;transform:scaleX(1.0200);">37,006</div>
<div class="t" style="left:388.00px;top:337.44px;font-size:6.8px;line-height:6.8px;color:#3f5d76;font-weight:400;">$</div>
<div class="t" style="left:442.43px;top:337.44px;font-size:6.8px;line-height:6.8px;color:#3f5d76;font-weight:400;transform:scaleX(1.0200);">764</div>
<div class="t" style="left:421.00px;top:337.44px;font-size:6.8px;line-height:6.8px;color:#3f5d76;font-weight:400;">$</div>
<div class="t" style="left:470.79px;top:337.44px;font-size:6.8px;line-height:6.8px;color:#3f5d76;font-weight:400;transform:scaleX(1.0200);">37,770</div>
<div class="t" style="left:462.00px;top:337.44px;font-size:6.8px;line-height:6.8px;color:#3f5d76;font-weight:400;">$</div>
<div class="r" style="left:494px;top:348px;width:19px;height:1px;background:#ffffff;"></div>
<div class="r" style="left:503px;top:339px;width:1px;height:19px;background:#ffffff;"></div>
<div class="r" style="left:494px;top:349px;width:19px;height:1px;background:#f0f0f0;"></div>
<div class="r" style="left:504px;top:339px;width:1px;height:19px;background:#f0f0f0;"></div>
<div class="t" style="left:95.00px;top:349.54px;font-size:4.8px;line-height:4.8px;color:#555;font-weight:400;transform:scaleX(1.0227);">(1)</div>
<div class="t" style="left:109.00px;top:349.54px;font-size:4.8px;line-height:4.8px;color:#555;font-weight:400;transform:scaleX(0.9720);">Based on total committed financing limit.</div>
<div class="t" style="left:95.00px;top:355.64px;font-size:4.8px;line-height:4.8px;color:#555;font-weight:400;transform:scaleX(1.0227);">(2)</div>
<div class="t" style="left:109.00px;top:355.64px;font-size:4.8px;line-height:4.8px;color:#555;font-weight:400;transform:scaleX(0.9419);">Net of allowance for loan losses and write-offs.</div>
<div class="t" style="left:95.00px;top:361.64px;font-size:4.8px;line-height:4.8px;color:#555;font-weight:400;transform:scaleX(1.0227);">(3)</div>
<div class="t" style="left:109.00px;top:361.64px;font-size:4.8px;line-height:4.8px;color:#555;font-weight:400;transform:scaleX(0.9631);">Not presented in the table above are derivative assets with a fair value of $11 million (2015 – $19 million) which are a component of our total maximum exposure to loss from our interests in</div>
<div class="t" style="left:109.00px;top:367.74px;font-size:4.8px;line-height:4.8px;color:#555;font-weight:400;transform:scaleX(0.9546);">the multi-seller conduits. Refer to Note 7 of our audited 2016 Annual Consolidated Financial Statements for more details.</div>
<div class="t" style="left:95.00px;top:383.25px;font-size:7.5px;line-height:7.5px;color:#3a3a3a;font-weight:400;transform:scaleX(0.8377);">As at October 31, 2016, the notional amount of backstop liquidity facilities we provide increased by $1,692 million or 4% from last year. The</div>
<div class="t" style="left:95.00px;top:390.75px;font-size:7.5px;line-height:7.5px;color:#3a3a3a;font-weight:400;transform:scaleX(0.8388);">increase in the amount of backstop liquidity facilities provided to the multi-seller conduits as compared to last year reflects increases in the</div>
<div class="t" style="left:95.00px;top:398.25px;font-size:7.5px;line-height:7.5px;color:#3a3a3a;font-weight:400;transform:scaleX(0.8437);">foreign exchange translation and the outstanding securitized assets of the multi-seller conduits. The notional amount of partial credit</div>
<div class="t" style="left:95.00px;top:405.75px;font-size:7.5px;line-height:7.5px;color:#3a3a3a;font-weight:400;transform:scaleX(0.8320);">enhancement facilities we provide decreased by $739 million from last year. The decrease in the credit enhancement facilities reflects fewer</div>
<div class="t" style="left:95.00px;top:413.25px;font-size:7.5px;line-height:7.5px;color:#3a3a3a;font-weight:400;transform:scaleX(0.8340);">transactions requiring program-level credit enhancement due to support provided directly to those transactions and decreased client usage.</div>
<div class="t" style="left:95.00px;top:420.75px;font-size:7.5px;line-height:7.5px;color:#3a3a3a;font-weight:400;transform:scaleX(0.8433);">Total loans extended to the multi-seller conduits under the backstop liquidity facilities decreased by $31 million from last year primarily due to</div>
<div class="t" style="left:95.00px;top:428.25px;font-size:7.5px;line-height:7.5px;color:#3a3a3a;font-weight:400;transform:scaleX(0.8375);">principal repayments which were partially offset by the impact of foreign exchange translation.</div>
<div class="r" style="left:265px;top:455px;width:115px;height:17px;background:#e8e8e8;"></div>
<div class="r" style="left:95px;top:440px;width:400px;height:14px;background:#7c7c7c;border-radius:6px;"></div>
<div class="t" style="left:102.00px;top:443.71px;font-size:7.2px;line-height:7.2px;color:#f4f4f4;font-weight:700;transform:scaleX(0.8117);">Maximum exposure to loss by client type</div>
<div class="t" style="left:465.00px;top:443.71px;font-size:7.2px;line-height:7.2px;color:#f4f4f4;font-weight:700;transform:scaleX(0.8840);">Table 44</div>
<div class="t" style="left:317.50px;top:457.74px;font-size:6.8px;line-height:6.8px;color:#444;font-weight:400;transform:scaleX(1.0577);">2016</div>
<div class="t" style="left:432.00px;top:457.74px;font-size:6.8px;line-height:6.8px;color:#555;font-weight:400;transform:scaleX(1.0577);">2015</div>
<div class="r" style="left:265px;top:465px;width:230px;height:1px;background:#555;"></div>
<div class="t" style="left:285.33px;top:469.42px;font-size:6px;line-height:6px;color:#444;font-weight:400;">(US$)</div>
<div class="t" style="left:333.33px;top:469.42px;font-size:6px;line-height:6px;color:#444;font-weight:400;">(C$)</div>
<div class="t" style="left:352.99px;top:469.42px;font-size:6px;line-height:6px;color:#444;font-weight:400;">Total (C$)</div>
<div class="t" style="left:400.33px;top:469.42px;font-size:6px;line-height:6px;color:#444;font-weight:400;">(US$)</div>
<div class="t" style="left:448.33px;top:469.42px;font-size:6px;line-height:6px;color:#444;font-weight:400;">(C$)</div>
<div class="t" style="left:467.99px;top:469.42px;font-size:6px;line-height:6px;color:#444;font-weight:400;">Total (C$)</div>
<div class="t" style="left:95.00px;top:470.84px;font-size:5.5px;line-height:5.5px;color:#555;font-weight:400;">As at October 31 (Millions of</div>
<div class="r" style="left:512px;top:158px;width:14px;height:87px;background:#2e2e2e;border-radius:6px 0 0 6px;"></div>
</div>
<div class="r" style="left:143px;top:131px;width:300px;height:112px;background:#c6c6c6;border:1px solid #6e6e6e;box-sizing:border-box;"></div>
<div class="r" style="left:144px;top:132px;width:298px;height:24px;background:#ffffff;"></div>
<div class="r" style="left:360px;top:131px;width:14px;height:1px;background:#505050;"></div>
<div class="r" style="left:144px;top:156px;width:298px;height:52px;background:#dfdfdf;"></div>
<div class="r" style="left:150px;top:137px;width:13px;height:13px;background:#1b5cab;border-radius:2px;"></div>
<svg class="r" style="left:150px;top:137px;" width="13" height="13" viewBox="0 0 13 13"><path d="M7.9 2.1C6.1 1.9 4.5 3.3 5 5C5.5 6.6 8.4 7.3 8.4 8.9C8.4 10.2 7 10.8 5.3 10.6" fill="none" stroke="#fff" stroke-width="1.25" stroke-linecap="round"/></svg>
<div class="t" style="left:167.20px;top:139.07px;font-size:9.6px;line-height:9.6px;color:#1a1a1a;font-weight:400;transform:scaleX(1.0307);">Information</div>
<svg class="r" style="left:425px;top:138px;" width="10" height="10" viewBox="0 0 10 10"><path d="M0.8 0.8L9.2 9.2M9.2 0.8L0.8 9.2" stroke="#333" stroke-width="1.1"/></svg>
<svg class="r" style="left:152px;top:163px;" width="36" height="36" viewBox="0 0 36 36"><circle cx="18.2" cy="18.3" r="17.4" fill="#ffffff"/><circle cx="18.2" cy="18.3" r="15.3" fill="#2b5dd9"/><circle cx="18.2" cy="11" r="2.2" fill="#fff"/><rect x="16.2" y="14.2" width="4" height="13.8" fill="#fff"/></svg>
<div class="t" style="left:196.30px;top:172.64px;font-size:9.4px;line-height:9.4px;color:#333;font-weight:400;transform:scaleX(0.9045);">The selected area has been copied to the clipboard.</div>
<div class="r" style="left:355px;top:215px;width:79px;height:21px;background:#cccccc;border:1.4px solid #3cbcc4;box-sizing:border-box;"></div>
<div class="t" style="left:389.00px;top:221.54px;font-size:9.4px;line-height:9.4px;color:#333;font-weight:400;transform:scaleX(0.8099);">OK</div>
<div class="r" style="left:389px;top:231px;width:7px;height:1px;background:#444;"></div>
</body></html>
